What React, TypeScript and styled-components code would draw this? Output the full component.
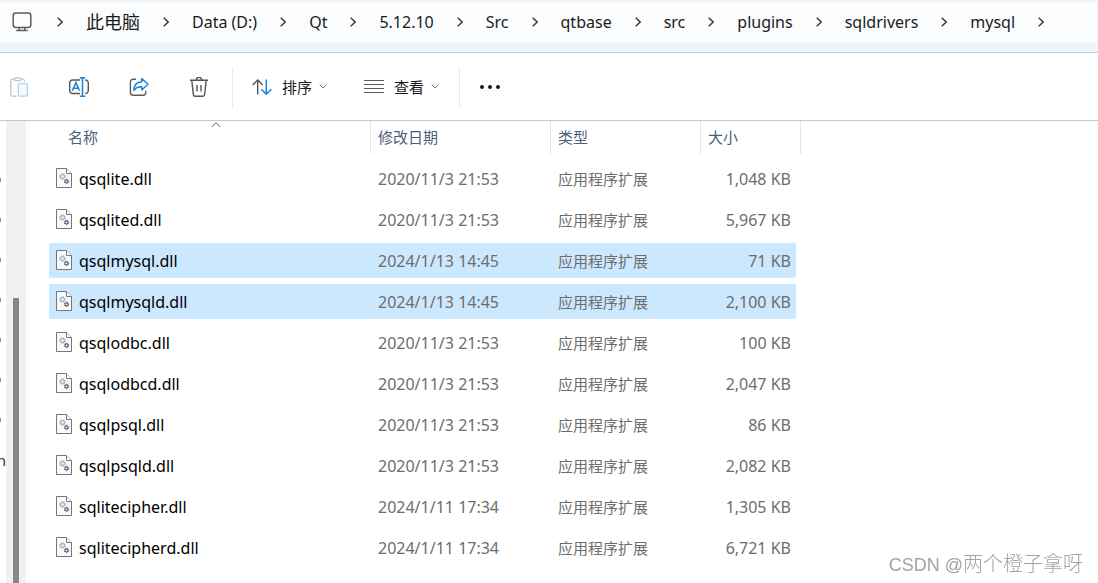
import React from "react";
import styled, { createGlobalStyle } from "styled-components";

const GlobalStyle = createGlobalStyle`
  * { box-sizing: border-box; }
  body {
    margin: 0;
    background: #ffffff;
    font-family: "Noto Sans", "Noto Sans CJK SC", sans-serif;
    font-size: 15px;
    color: #1b1b1b;
  }
  button {
    margin: 0;
    padding: 0;
    border: 0;
    background: none;
    font: inherit;
    color: inherit;
    cursor: pointer;
  }
  svg { display: block; flex: none; }
`;

const Page = styled.div`
  display: flex;
  flex-direction: column;
  min-height: 100vh;
  overflow: hidden;
`;

const AddressBar = styled.nav`
  padding: 2px 0 10px;
  background: #eff4f9;
  border-bottom: 1px solid #b9ccdc;
`;

const CrumbList = styled.ol`
  display: flex;
  align-items: center;
  height: 40px;
  margin: 0;
  padding: 0 12px;
  list-style: none;
  background: #fafcfe;
`;

const Crumb = styled.li`
  display: flex;
  align-items: center;
  flex: none;
  &:first-child { padding-left: 0; gap: 2px; }
`;

const CrumbButton = styled.button<{ $cjk?: boolean }>`
  font-size: ${(p) => (p.$cjk ? 18 : 16)}px;
  line-height: 24px;
  white-space: nowrap;
`;

const CrumbArrow = styled.svg`
  margin: 0 23px;
`;

const Toolbar = styled.div`
  display: flex;
  align-items: center;
  height: 68px;
  padding-left: 9px;
  border-bottom: 1px solid #b9ccdc;
`;

const IconGroup = styled.div`
  display: flex;
  gap: 40px;
  padding-right: 3px;
`;

const ToolButton = styled.button`
  display: flex;
  align-items: center;
  &:disabled { cursor: default; }
`;

const MenuGroup = styled.div`
  display: flex;
  gap: 37px;
`;

const MenuLabel = styled.span`
  margin: 0 7px 0 10px;
  line-height: 22px;
  white-space: nowrap;
`;

const Divider = styled.span`
  width: 1px;
  height: 40px;
  margin: 0 19px 0 20px;
  background: #e8e8e8;
`;

const Body = styled.div`
  display: flex;
  flex: 1;
`;

const Sidebar = styled.aside`
  flex: none;
  width: 6px;
  padding-top: 39px;
  overflow: hidden;
`;

const SideItem = styled.div`
  display: flex;
  align-items: center;
  justify-content: flex-end;
  height: 40px;
  color: #1f3350;
`;

const SideText = styled.span`
  line-height: 22px;
`;

const Pin = styled.span`
  width: 1px;
  height: 4px;
  margin-right: auto;
  background: #8b95a1;
`;

const ScrollTrack = styled.div`
  display: flex;
  flex: none;
  justify-content: center;
  width: 20px;
  padding-top: 177px;
  background: #f0f0f0;
`;

const ScrollThumb = styled.div`
  width: 6px;
  background: #868686;
`;

const Content = styled.main`
  flex: 1;
  min-width: 0;
  margin-left: 2px;
  padding-left: 20px;
  border-left: 1px solid #f5f5f5;
`;

const FileTable = styled.table`
  width: 752px;
  table-layout: fixed;
  border-spacing: 0;
`;

const HeadCell = styled.th`
  height: 37px;
  padding: 0;
  vertical-align: top;
  font-weight: 400;
  text-align: left;
  color: #4c607a;
`;

const HeadLabel = styled.div<{ $first?: boolean }>`
  display: grid;
  height: 33px;
  margin-left: ${(p) => (p.$first ? 12 : 0)}px;
  border-right: 1px solid #e5e5e5;
  line-height: 32px;
  > * { grid-area: 1 / 1; }
  > span { padding-left: 7px; }
`;

const SortMark = styled.svg`
  justify-self: center;
  align-self: start;
`;

const FileRow = styled.tr<{ $selected?: boolean }>`
  --row: ${(p) => (p.$selected ? "#cce8ff" : "transparent")};
`;

const Cell = styled.td`
  height: 41px;
  padding: 0 0 0 7px;
  border: solid transparent;
  border-width: 3px 0;
  background: var(--row) padding-box;
  color: #6d6d6d;
  white-space: nowrap;
  line-height: 22px;
  &:first-child { border-radius: 2px 0 0 2px / 5px 0 0 5px; }
`;

const DateCell = styled(Cell)`
  font-size: 16px;
`;

const SizeCell = styled(Cell)`
  padding: 0 5px 0 0;
  border-radius: 0 2px 2px 0 / 0 5px 5px 0;
  font-size: 16px;
  text-align: right;
`;

const FileName = styled.span`
  display: flex;
  align-items: center;
  gap: 7px;
  font-size: 16px;
  color: #000000;
  > svg { margin-bottom: 2px; }
`;

const Watermark = styled.div`
  position: fixed;
  right: 15px;
  bottom: 3px;
  font-family: "Liberation Sans", "Noto Sans CJK SC", sans-serif;
  font-weight: 300;
  font-size: 18px;
  line-height: 30px;
  color: #a3a3a3;
  white-space: nowrap;
`;

const WatermarkName = styled.span`
  font-size: 20px;
`;

const ChevronRight = () => (
  <CrumbArrow width="6" height="10" viewBox="0 0 6 10" fill="none" stroke="#333" strokeWidth="1.4">
    <path d="M.7.7 5.2 5 .7 9.3" />
  </CrumbArrow>
);

const ChevronDown = () => (
  <svg width="8" height="5" viewBox="0 0 8 5" fill="none" stroke="#777" strokeWidth="1">
    <path d="M.7.7 4 4 7.3.7" />
  </svg>
);

const MonitorIcon = () => (
  <svg width="20" height="20" viewBox="0 0 20 20" fill="none" stroke="#5c5c5c" strokeWidth="1.5">
    <rect x="1.2" y="1" width="17.6" height="14.4" rx="2.6" />
    <path d="M7.3 15.5v3M12.7 15.5v3M4.3 18.6h11.4" />
  </svg>
);

const PasteIcon = () => (
  <svg width="20" height="20" viewBox="0 0 20 20" fill="none" strokeWidth="1.3">
    <path d="M5.5 2.2H3.2a1.4 1.4 0 0 0-1.4 1.4v14.2a1.4 1.4 0 0 0 1.4 1.4h4.3M12 2.2h2a1.4 1.4 0 0 1 1.4 1.4v1" stroke="#c3c3c3" />
    <rect x="5.5" y=".8" width="6.5" height="2.8" rx="1.4" stroke="#c3c3c3" />
    <rect x="9.3" y="6.6" width="9" height="12.6" rx="1.4" stroke="#a9d3f3" fill="#f5faff" />
  </svg>
);

const RenameIcon = () => (
  <svg width="20" height="20" viewBox="0 0 20 20" fill="none" strokeWidth="1.4">
    <path d="M11 3H3.6A2.9 2.9 0 0 0 .7 5.9v7.7a2.9 2.9 0 0 0 2.9 2.9H11M16.2 3a3 3 0 0 1 3.1 2.9v7.7a3 3 0 0 1-3.1 2.9" stroke="#555" />
    <path d="M3.3 13.8 6.9 5.7l3.6 8.1M4.5 11.2h4.8M13.5 1v18M10.8.8h5.4M10.8 19.2h5.4" stroke="#1681d8" strokeWidth="1.5" />
  </svg>
);

const ShareIcon = () => (
  <svg width="20" height="20" viewBox="0 0 20 20" fill="none" strokeWidth="1.4" strokeLinejoin="round">
    <path d="M7 2.3H4.1a2.7 2.7 0 0 0-2.7 2.7v10.5a2.7 2.7 0 0 0 2.7 2.7h10a2.7 2.7 0 0 0 2.7-2.7v-1.7" stroke="#5b5b5b" />
    <path d="M12.7 1.5 19 7.3l-6.3 5.6V9.7C8.8 9.5 6.6 10.8 4.9 13.5c0-4.9 2.9-8.3 7.8-8.7z" stroke="#1681d8" />
  </svg>
);

const TrashIcon = () => (
  <svg width="20" height="20" viewBox="0 0 20 20" fill="none" stroke="#555" strokeWidth="1.4">
    <path d="M1 3.2h18M7.3 3a2.7 2.7 0 0 1 5.4 0M2.8 3.4l1.5 13.9a2.1 2.1 0 0 0 2.1 1.9h7.2a2.1 2.1 0 0 0 2.1-1.9l1.5-13.9M8 8v6.6M12 8v6.6" />
  </svg>
);

const SortIcon = () => (
  <svg width="20" height="20" viewBox="0 0 20 20" fill="none" strokeWidth="1.4">
    <path d="M5.7 17.3V3M.7 8l5-5 5 5" stroke="#555" />
    <path d="M14.3 2.5v14.7M9.3 12.3l5 5 5-5" stroke="#1681d8" strokeWidth="1.5" />
  </svg>
);

const ListIcon = () => (
  <svg width="20" height="20" viewBox="0 0 20 20" stroke="#5a5a5a" strokeWidth="1">
    <path d="M0 3.5h20M0 7.5h20M0 11.5h20M0 15.5h20" />
  </svg>
);

const MoreIcon = () => (
  <svg width="22" height="6" viewBox="0 0 22 6" fill="#1b1b1b">
    <circle cx="3" cy="3" r="2" />
    <circle cx="11" cy="3" r="2" />
    <circle cx="19" cy="3" r="2" />
  </svg>
);

const DllIcon = () => (
  <svg width="16" height="20" viewBox="0 0 16 20" fill="none">
    <path d="M.5.5h10l5 5v14H.5z" fill="#f9fafb" stroke="#777" />
    <path d="M10.5.5v5h5" fill="#fff" stroke="#777" />
    <circle cx="6.5" cy="8.5" r="1.9" stroke="#a5b0bd" strokeWidth="1.2" />
    <circle cx="6.5" cy="8.5" r="2.9" stroke="#a5b0bd" strokeWidth="1" strokeDasharray="1.14 1.14" />
    <circle cx="10.5" cy="13.4" r="1.5" stroke="#58636d" strokeWidth="1.1" />
    <circle cx="10.5" cy="13.4" r="2.3" stroke="#58636d" strokeWidth=".9" strokeDasharray="1.2 1.2" />
  </svg>
);

const crumbs = ["此电脑", "Data (D:)", "Qt", "5.12.10", "Src", "qtbase", "src", "plugins", "sqldrivers", "mysql"];

const files = [
  { name: "qsqlite.dll", date: "2020/11/3 21:53", size: "1,048 KB" },
  { name: "qsqlited.dll", date: "2020/11/3 21:53", size: "5,967 KB" },
  { name: "qsqlmysql.dll", date: "2024/1/13 14:45", size: "71 KB", selected: true },
  { name: "qsqlmysqld.dll", date: "2024/1/13 14:45", size: "2,100 KB", selected: true },
  { name: "qsqlodbc.dll", date: "2020/11/3 21:53", size: "100 KB" },
  { name: "qsqlodbcd.dll", date: "2020/11/3 21:53", size: "2,047 KB" },
  { name: "qsqlpsql.dll", date: "2020/11/3 21:53", size: "86 KB" },
  { name: "qsqlpsqld.dll", date: "2020/11/3 21:53", size: "2,082 KB" },
  { name: "sqlitecipher.dll", date: "2024/1/11 17:34", size: "1,305 KB" },
  { name: "sqlitecipherd.dll", date: "2024/1/11 17:34", size: "6,721 KB" },
];

const pins = [0, 1, 2, 3, 4, 5, 6];

export default function App() {
  return (
    <Page>
      <GlobalStyle />
      <AddressBar>
        <CrumbList>
          <Crumb>
            <MonitorIcon />
            <ChevronRight />
          </Crumb>
          {crumbs.map((label, i) => (
            <Crumb key={label}>
              <CrumbButton type="button" $cjk={i === 0}>{label}</CrumbButton>
              <ChevronRight />
            </Crumb>
          ))}
        </CrumbList>
      </AddressBar>
      <Toolbar role="toolbar">
        <IconGroup>
          <ToolButton type="button" aria-label="粘贴" disabled><PasteIcon /></ToolButton>
          <ToolButton type="button" aria-label="重命名"><RenameIcon /></ToolButton>
          <ToolButton type="button" aria-label="共享"><ShareIcon /></ToolButton>
          <ToolButton type="button" aria-label="删除"><TrashIcon /></ToolButton>
        </IconGroup>
        <Divider />
        <MenuGroup>
          <ToolButton type="button"><SortIcon /><MenuLabel>排序</MenuLabel><ChevronDown /></ToolButton>
          <ToolButton type="button"><ListIcon /><MenuLabel>查看</MenuLabel><ChevronDown /></ToolButton>
        </MenuGroup>
        <Divider />
        <ToolButton type="button" aria-label="更多"><MoreIcon /></ToolButton>
      </Toolbar>
      <Body>
        <Sidebar>
          {pins.map((p) => (
            <SideItem key={p}><Pin /></SideItem>
          ))}
          <SideItem><SideText>n</SideText></SideItem>
        </Sidebar>
        <ScrollTrack><ScrollThumb /></ScrollTrack>
        <Content>
          <FileTable>
            <colgroup>
              <col style={{ width: 322 }} />
              <col style={{ width: 180 }} />
              <col style={{ width: 150 }} />
              <col style={{ width: 95 }} />
              <col style={{ width: 5 }} />
            </colgroup>
            <thead>
              <tr>
                <HeadCell aria-sort="ascending">
                  <HeadLabel $first>
                    <span>名称</span>
                    <SortMark width="10" height="7" viewBox="0 0 10 7" fill="none" stroke="#555">
                      <path d="M.7 6 5 1.7 9.3 6" />
                    </SortMark>
                  </HeadLabel>
                </HeadCell>
                <HeadCell><HeadLabel><span>修改日期</span></HeadLabel></HeadCell>
                <HeadCell><HeadLabel><span>类型</span></HeadLabel></HeadCell>
                <HeadCell colSpan={2}><HeadLabel><span>大小</span></HeadLabel></HeadCell>
              </tr>
            </thead>
            <tbody>
              {files.map((f) => (
                <FileRow key={f.name} $selected={f.selected}>
                  <Cell><FileName><DllIcon />{f.name}</FileName></Cell>
                  <DateCell>{f.date}</DateCell>
                  <Cell>应用程序扩展</Cell>
                  <SizeCell>{f.size}</SizeCell>
                </FileRow>
              ))}
            </tbody>
          </FileTable>
        </Content>
      </Body>
      <Watermark>CSDN @<WatermarkName>两个橙子拿呀</WatermarkName></Watermark>
    </Page>
  );
}
